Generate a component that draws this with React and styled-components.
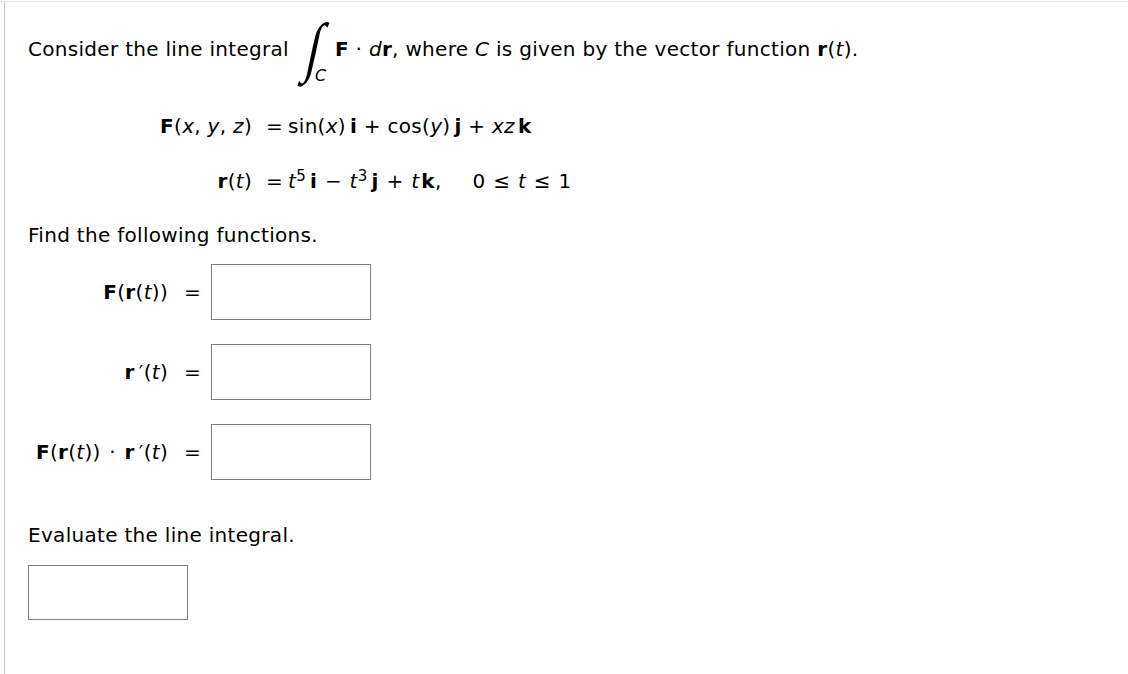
import React from 'react';
import styled, { createGlobalStyle } from 'styled-components';

const GlobalStyle = createGlobalStyle`
  html, body { margin: 0; padding: 0; background: #fff; }
  body { font-family: "DejaVu Sans", Verdana, sans-serif; color: #000; }
`;

const Page = styled.div`
  padding-top: 1px;
`;

const Frame = styled.div`
  border-top: 1px solid #e2e2e2;
  padding-left: 4px;
`;

const Panel = styled.div`
  border-left: 1px solid #c9c9c9;
  min-height: 672px;
  box-sizing: border-box;
  padding: 20px 0 0 23px;
  font-size: 20px;
  line-height: 24px;
  letter-spacing: 0.3px;
`;

const IntroLine = styled.div`
  display: flex;
  align-items: flex-start;
  height: 60px;
  white-space: nowrap;
`;

const Txt = styled.span`
  margin-top: 15px;
`;

const Integral = styled.span`
  display: flex;
  align-items: flex-end;
  width: 29px;
  height: 60px;
  margin-left: 17px;
  letter-spacing: 0;
`;

const Sign = styled.span`
  font-family: "Liberation Serif", "DejaVu Serif", serif;
  font-size: 66px;
  line-height: 60px;
  height: 60px;
  display: block;
  margin-bottom: 5px;
  transform: skewX(-12deg) scaleX(0.75);
  transform-origin: 50% 50%;
`;

const Sub = styled.i`
  font-size: 16px;
  line-height: 16px;
  margin-left: -9px;
  margin-bottom: -2px;
`;

const B = styled.b`
  font-weight: bold;
  font-style: normal;
  margin-left: ${p => p.$gap || 0}px;
`;

const I = styled.i`
  font-style: italic;
`;

const Prime = styled.span`
  margin-left: 4px;
`;

const Sup = styled.sup`
  font-size: 15px;
  line-height: 0;
  vertical-align: 7px;
  margin-right: 4px;
`;

const EqGrid = styled.div`
  display: grid;
  grid-template-columns: 97px max-content max-content;
  row-gap: 31px;
  margin-top: 32px;
  padding-left: 127px;
  white-space: pre;
`;

const Rhs = styled.div`
  word-spacing: ${p => p.$ws || 0}px;
`;

const Left = styled.div`
  justify-self: end;
  white-space: pre;
`;

const EqSign = styled.div`
  padding: 0 5px 0 14px;
`;

const Para = styled.div`
  margin-top: ${p => p.$top}px;
`;

const AnswerGrid = styled.div`
  display: grid;
  grid-template-columns: 140px max-content 160px;
  row-gap: 24px;
  align-items: center;
  margin-top: 17px;
  white-space: pre;
`;

const AnswerLabel = styled(Left)`
  word-spacing: 2px;
`;

const AnswerEq = styled.div`
  padding: 0 10px 0 16px;
  letter-spacing: 0;
`;

const Box = styled.div`
  box-sizing: border-box;
  width: 160px;
  height: 56px;
  border: 1px solid #808080;
  background: #fff;
`;

const FinalBox = styled(Box)`
  margin-top: 18px;
  height: 55px;
`;

const Gap = styled.span`
  display: inline-block;
  width: ${p => p.$w}px;
`;

export default function App() {
  return (
    <Page>
      <GlobalStyle />
      <Frame>
        <Panel>
          <IntroLine>
            <Txt>Consider the line integral</Txt>
            <Integral>
              <Sign>∫</Sign>
              <Sub>C</Sub>
            </Integral>
            <Txt>
              <B>F</B> · <I>d</I><B>r</B>, where <I>C</I> is given by the vector function <B>r</B>(<I>t</I>).
            </Txt>
          </IntroLine>

          <EqGrid>
            <Left><B>F</B>(<I>x</I>, <I>y</I>, <I>z</I>)</Left>
            <EqSign>=</EqSign>
            <Rhs>sin(<I>x</I>)<B $gap={4}>i</B> + cos(<I>y</I>)<B $gap={4}>j</B> + <I>xz</I><B $gap={3}>k</B></Rhs>
            <Left><B>r</B>(<I>t</I>)</Left>
            <EqSign>=</EqSign>
            <Rhs $ws={1}>
              <I>t</I><Sup>5</Sup><B>i</B> − <I>t</I><Sup>3</Sup><B>j</B> + <I>t</I><B $gap={2}>k</B>,<Gap $w={31} />0 ≤ <I>t</I> ≤ 1
            </Rhs>
          </EqGrid>

          <Para $top={30}>Find the following functions.</Para>

          <AnswerGrid>
            <AnswerLabel><B>F</B>(<B>r</B>(<I>t</I>))</AnswerLabel>
            <AnswerEq>=</AnswerEq>
            <Box />
            <AnswerLabel><B>r</B><Prime>′</Prime>(<I>t</I>)</AnswerLabel>
            <AnswerEq>=</AnswerEq>
            <Box />
            <AnswerLabel><B>F</B>(<B>r</B>(<I>t</I>)) · <B>r</B><Prime>′</Prime>(<I>t</I>)</AnswerLabel>
            <AnswerEq>=</AnswerEq>
            <Box />
          </AnswerGrid>

          <Para $top={43}>Evaluate the line integral.</Para>
          <FinalBox />
        </Panel>
      </Frame>
    </Page>
  );
}
